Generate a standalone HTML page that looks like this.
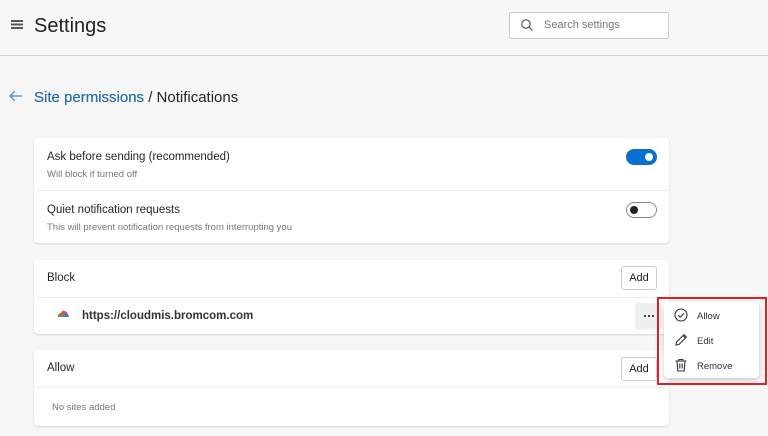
<!DOCTYPE html>
<html><head><meta charset="utf-8"><style>
*{box-sizing:border-box;margin:0;padding:0}
body{width:768px;height:436px;background:#f7f7f7;font-family:"Liberation Sans",sans-serif;color:#1b1b1b;position:relative;overflow:hidden}
.a{position:absolute}
.card{position:absolute;left:34px;width:635px;background:#fff;border-radius:4px;box-shadow:0 1px 2px rgba(0,0,0,.15)}
.t{font-size:11.5px;color:#262626}
.s{font-size:9.5px;color:#777}
.btn{position:absolute;width:36px;height:24px;border:1px solid #ccc;border-radius:3px;background:#fff;font-size:11px;text-align:center;line-height:22px}
.hr{position:absolute;left:0;right:0;height:1px;background:#ededed}
</style></head><body>
<div class="a" style="left:11px;top:20px;width:12px;height:1.5px;background:#555;box-shadow:0 3.5px 0 #555,0 7px 0 #555"></div>
<div class="a" style="left:34px;top:15px;font-size:20px;color:#222">Settings</div>
<div class="a" style="left:509px;top:12px;width:160px;height:27px;border:1px solid #ccc;background:#fff;border-radius:2px"></div>
<svg class="a" style="left:520px;top:18px" width="14" height="14" viewBox="0 0 14 14"><circle cx="6" cy="6" r="4.2" fill="none" stroke="#555" stroke-width="1.2"/><path d="M9 9l3.5 3.5" stroke="#555" stroke-width="1.2"/></svg>
<div class="a" style="left:544px;top:19px;font-size:11px;color:#777">Search settings</div>
<div class="a" style="left:0;top:55px;width:768px;height:1px;background:#d0d0d0"></div>
<svg class="a" style="left:9px;top:90px" width="14" height="12" viewBox="0 0 14 12"><path d="M13 6H1.5M6 1L1 6l5 5" fill="none" stroke="#3b8ad8" stroke-width="1.2"/></svg>
<div class="a" style="left:34px;top:89px;font-size:15px;color:#222">Site permissions / Notifications</div>
<div class="a" style="left:34px;top:89px;font-size:15px;color:#1f6fbf">Site permissions</div>

<div class="card" style="top:138px;height:105px">
<div class="a t" style="left:13px;top:13px">Ask before sending (recommended)</div>
<div class="a s" style="left:13px;top:31px">Will block if turned off</div>
<div class="a" style="left:592px;top:11px;width:31px;height:16px;border-radius:8px;background:#0a6fd0"></div>
<div class="a" style="left:611px;top:15px;width:8px;height:8px;border-radius:50%;background:#fff"></div>
<div class="hr" style="top:52px"></div>
<div class="a t" style="left:13px;top:66px">Quiet notification requests</div>
<div class="a s" style="left:13px;top:84px">This will prevent notification requests from interrupting you</div>
<div class="a" style="left:592px;top:64px;width:31px;height:16px;border-radius:8px;border:1px solid #888;background:#fff"></div>
<div class="a" style="left:596px;top:68px;width:8px;height:8px;border-radius:50%;background:#222"></div>
</div>

<div class="card" style="top:260px;height:74px">
<div class="a t" style="left:13px;top:12px">Block</div>
<div class="btn" style="left:587px;top:6px">Add</div>
<div class="hr" style="top:37px"></div>
<svg class="a" style="left:23px;top:50px" width="13" height="8" viewBox="0 0 13 8"><path d="M1 7Q1 3 4 3Q5 0 8 1Q11 2 12 7Z" fill="#e94b3c"/><path d="M1 7Q2 4 6 5L9 7Z" fill="#3aa84b"/><path d="M6 7L8 3Q11 4 12 7Z" fill="#3c7be0"/></svg>
<div class="a" style="left:48px;top:50px;font-size:11.5px;font-weight:bold;color:#333">https://cloudmis.bromcom.com</div>
<div class="a" style="left:601px;top:43px;width:27px;height:26px;background:#efefef;border-radius:2px"></div>
<div class="a" style="left:610px;top:55px;width:2px;height:2px;background:#444;box-shadow:4px 0 0 #444,8px 0 0 #444"></div>
</div>

<div class="card" style="top:350px;height:76px">
<div class="a t" style="left:13px;top:12px">Allow</div>
<div class="btn" style="left:587px;top:7px">Add</div>
<div class="hr" style="top:37px"></div>
<div class="a s" style="left:18px;top:52px">No sites added</div>
</div>

<div class="a" style="left:664px;top:302px;width:95px;height:76px;background:#fff;border-radius:4px;box-shadow:0 2px 6px rgba(0,0,0,.2)"></div>
<svg class="a" style="left:674px;top:308px" width="14" height="14" viewBox="0 0 14 14"><circle cx="7" cy="7" r="6" fill="none" stroke="#333" stroke-width="1.1"/><path d="M4.2 7.2l2 2 3.8-4" fill="none" stroke="#333" stroke-width="1.1"/></svg>
<div class="a" style="left:697px;top:311px;font-size:9.5px;color:#333">Allow</div>
<svg class="a" style="left:674px;top:333px" width="14" height="14" viewBox="0 0 14 14"><path d="M2 12l.6-3L10 1.6l2.4 2.4L5 11.4z M9 2.6l2.4 2.4" fill="none" stroke="#333" stroke-width="1.1"/></svg>
<div class="a" style="left:697px;top:336px;font-size:9.5px;color:#333">Edit</div>
<svg class="a" style="left:674px;top:358px" width="14" height="14" viewBox="0 0 14 14"><path d="M1.5 3h11M5 3V1.5h4V3M3 3l.8 10h6.4L11 3M5.8 5.5v5M8.2 5.5v5" fill="none" stroke="#333" stroke-width="1.1"/></svg>
<div class="a" style="left:697px;top:361px;font-size:9.5px;color:#333">Remove</div>
<div class="a" style="left:657px;top:297px;width:110px;height:88px;border:2px solid #e02020"></div>
</body></html>
